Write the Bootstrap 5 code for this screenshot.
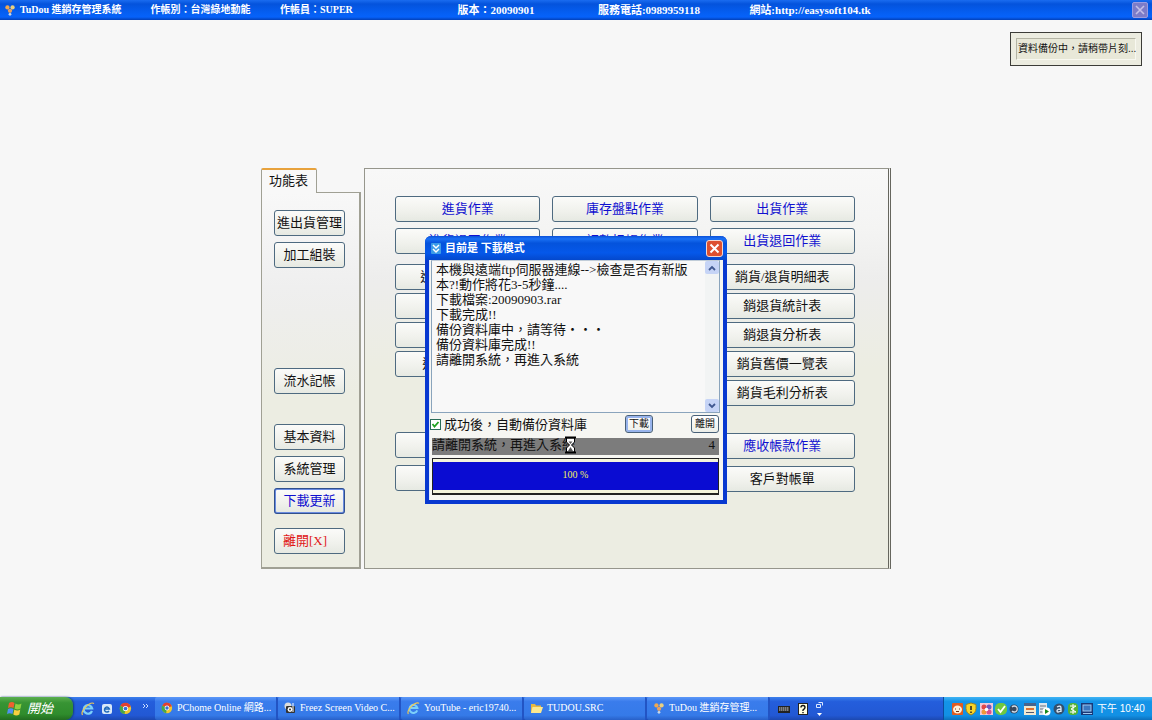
<!DOCTYPE html>
<html lang="zh-Hant">
<head>
<meta charset="utf-8">
<meta name="viewport" content="width=device-width, initial-scale=1">
<title>TuDou 進銷存管理系統</title>
<link href="https://cdn.jsdelivr.net/npm/bootstrap@5.3.0/dist/css/bootstrap.min.css" rel="stylesheet">
<style>
body{font-family:"Liberation Serif","Noto Sans CJK TC",serif;font-size:13px;line-height:15px;color:#111;background:#f7f7f7;}
button,textarea,input{font-family:inherit;}
.titlebar{height:20px;background:linear-gradient(#1a6cf0,#0453dc 20%,#0560f5 70%,#0662fa 85%,#0340b8);color:#fff;font-weight:700;font-size:10px;line-height:20px;}
.title-cells{display:grid;grid-template-columns:131fr 130fr 178fr 141fr 152fr 384fr;white-space:nowrap;}
.title-cells .wide-text{font-size:11px;}
.title-cells a{color:inherit;text-decoration:none;}
.app-close{width:16px;height:16px;background:#7d7cc8;border:1px solid #9a9be0;border-radius:2px;}
.desktop{padding-top:148px;}
.notice{top:12px;right:10px;width:132px;background:#ecece0;border:1px solid #3c3c38;padding:5px;}
.notice div{border:1px solid;border-color:#b4b4a4 #f8f8f0 #f8f8f0 #b4b4a4;background:#e8e8d8;font-family:"Liberation Sans","Noto Sans CJK TC",sans-serif;font-size:10px;line-height:20px;white-space:nowrap;padding-left:1px;}
.workspace{max-width:630px;gap:3px;}
.side{width:100px;}
.tab-head{width:56px;height:25px;line-height:21px;border:1px solid #a0a094;border-top:2px solid #e8a23c;border-bottom:0;border-radius:2px 2px 0 0;background:#f8f8f8;padding-left:7px;margin-bottom:-1px;z-index:1;}
.side-body{border:1px solid #a0a094;border-right-width:2px;border-bottom-width:2px;padding:17px 14px 13px 12px;gap:6px;background:linear-gradient(#f8f8f8,#efefef 25%,#eeeeec 32%,#ecede2 55%,#ecede2);}
.main-panel{min-height:401px;border:1px solid #96968c;border-right:3px double #66665e;background:linear-gradient(#f8f8f8,#f4f4f3 15%,#ededec 28%,#ecede2 50%,#ecede2);padding:27px 33px 0 30px;gap:12px;}
.main-panel .menu-col{flex:1 1 0;gap:3px;}
.xp-btn{height:26px;padding:0;border:1px solid #4e6a80;border-radius:3px;background:linear-gradient(#fbfbf9,#f0f1ec 60%,#e6e9e2);color:#111;font-size:13px;line-height:24px;white-space:nowrap;}
.blue-text{color:#1010d0;}
.red-text{color:#e01818;}
.side-body .current{border:2px solid #6a8ce0;outline:1px solid #31508c;outline-offset:-1px;line-height:22px;}
.row-gap{margin-bottom:3px;}
.block-gap{margin-bottom:7px;}
.account-gap{margin-top:52px;}
.dialog{top:216px;width:302px;height:268px;background:#f6f6f2;border:solid #0838d0;border-width:0 4px 4px;border-radius:6px 6px 0 0;box-shadow:inset 1px 0 #dfe8f8;}
.dialog-title{height:24px;margin:0 -4px;padding:0 4px 0 6px;border-radius:6px 6px 0 0;background:linear-gradient(#0a50d8,#1a70f4 12%,#0453dc 30%,#0558ea 70%,#0448cc);color:#fff;font-size:11px;font-weight:700;}
.dialog-close{width:17px;height:17px;background:#dd5030;border:1px solid #f4d8d0;border-radius:3px;}
.log-wrap{margin:0 3px 0 2px;height:153px;border:1px solid #8aa4bc;border-top-color:#c0ccd8;background:#f8f8f8;}
.log{flex:1;min-width:0;border:0;resize:none;overflow:hidden;background:transparent;font-size:13px;line-height:15px;padding:1px 0 0 4px;color:#111;outline:0;white-space:pre;}
.scroller{width:14px;background:#f2f4f4;}
.scroller button{height:13px;border:0;background:#c6d4f6;border-radius:2px;}
.checks{height:22px;margin:0 4px 0 1px;}
.checks input{appearance:none;width:11px;height:11px;margin:0;border:1px solid #2c6c58;background:#fff url("data:image/svg+xml,%3Csvg xmlns='http://www.w3.org/2000/svg' viewBox='0 0 9 9'%3E%3Cpath d='M1.5 4l2 2.5 4-4.5' fill='none' stroke='%2321a121' stroke-width='1.8'/%3E%3C/svg%3E");}
.checks label{padding-left:3px;}
.mini-btn{width:28px;height:18px;padding:0;font-size:10px;line-height:14px;border:1px solid #486078;border-radius:3px;background:linear-gradient(#fff,#eceee8);color:#111;white-space:nowrap;}
.mini-btn.is-default{box-shadow:inset 0 0 0 2px #98b4ec;}
.leave-btn{margin-left:38px;}
.status-strip{height:17px;margin:3px 4px 0 3px;background:#7c7c7c;line-height:14px;}
.meter{height:37px;margin:3px 4px 0 3px;background:#f4f4dc;border:1px solid #222;border-width:1px 1px 2px;padding:3px 0;}
.meter-fill{height:28px;background:#0a0cd2;color:#f0f060;font-size:10px;line-height:26px;}
.busy-cursor{left:133px;top:-2px;}
.taskbar{height:23px;background:linear-gradient(#3c80ec,#245edc 20%,#2258d4 80%,#1c48b0);color:#fff;font-size:10px;line-height:22px;}
.start-btn{width:73px;border:0;padding:0 0 0 7px;color:#fff;font-style:italic;font-size:13px;background:linear-gradient(#5cb050,#389434 25%,#2f8c2c 75%,#226c20);border-radius:0 8px 8px 0;box-shadow:1px 0 2px #143c80;}
.quick{width:82px;padding-left:8px;gap:6px;}
.tasks{width:615px;}
.task{flex:1 1 0;min-width:0;border:0;padding:0 0 1px 6px;gap:4px;color:#fff;font-size:10px;text-align:left;white-space:nowrap;overflow:hidden;background:linear-gradient(#5c98f8,#3a7cec 20%,#357ae8 80%,#2860c8);border-right:2px solid #2254c4;border-radius:2px;}
.tray{width:209px;padding-left:8px;background:linear-gradient(#40b4f4,#1494e8 20%,#1290e4 80%,#0c70bc);border-left:1px solid #0c4c9c;}
.clock{margin-left:3px;font-family:"Liberation Sans","Noto Sans CJK TC",sans-serif;font-size:10px;white-space:nowrap;}
svg{display:block;flex:none;}
</style>
</head>
<body class="d-flex flex-column min-vh-100">
<svg width="0" height="0" class="position-absolute" aria-hidden="true">
  <symbol id="tudou" viewBox="0 0 14 14"><circle cx="4" cy="4" r="2.5" fill="#f0a850"/><circle cx="10" cy="4" r="2.5" fill="#e8d080"/><circle cx="7" cy="8" r="2.5" fill="#e8a060"/><circle cx="7" cy="12" r="1.6" fill="#c8d8e8"/></symbol>
  <symbol id="ie" viewBox="0 0 14 14"><path d="M11 9A4.3 4.3 0 1 1 11.200 6.500H4" fill="none" stroke="#7cd0fa" stroke-width="2.200"/><path d="M1.500 13C-1 9 9-1 13 1.500" fill="none" stroke="#f4c850" stroke-width="1.200"/></symbol>
  <symbol id="chrome" viewBox="0 0 14 14"><circle cx="7" cy="7" r="6" fill="#f0c830"/><path d="M7 7L1.500 4A6 6 0 0 1 12.600 5z" fill="#e04030"/><path d="M7 7L1.500 4A6 6 0 0 0 6 13z" fill="#48a848"/><circle cx="7" cy="7" r="2.800" fill="#fff"/><circle cx="7" cy="7" r="2" fill="#3870d8"/></symbol>
</svg>

<header class="titlebar d-flex align-items-center pe-1">
  <svg width="12" height="12" class="ms-1 me-1" viewBox="1 0 12 14" aria-hidden="true"><use href="#tudou" width="14" height="14"/></svg>
  <div class="title-cells flex-grow-1">
    <span>TuDou 進銷存管理系統</span>
    <span>作帳別：台灣綠地動能</span>
    <span>作帳員：SUPER</span>
    <span class="wide-text">版本：20090901</span>
    <span class="wide-text">服務電話:0989959118</span>
    <span class="wide-text">網站:<a href="#">http://easysoft104.tk</a></span>
  </div>
  <button class="app-close d-flex align-items-center justify-content-center p-0" aria-label="關閉"><svg width="10" height="10" viewBox="0 0 10 10"><path d="M1 1l8 8M9 1l-8 8" stroke="#c4c0e8" stroke-width="1.600"/></svg></button>
</header>

<main class="desktop flex-grow-1 position-relative">
  <div class="notice position-absolute"><div>資料備份中，請稍帶片刻...</div></div>

  <div class="workspace d-flex mx-auto">
    <nav class="side d-flex flex-column">
      <div class="tab-head position-relative">功能表</div>
      <div class="side-body d-flex flex-column flex-grow-1">
        <button class="xp-btn">進出貨管理</button>
        <button class="xp-btn">加工組裝</button>
        <button class="xp-btn mt-auto">流水記帳</button>
        <button class="xp-btn mt-4">基本資料</button>
        <button class="xp-btn">系統管理</button>
        <button class="xp-btn current blue-text">下載更新</button>
        <button class="xp-btn red-text text-start ps-2 mt-2">離開[X]</button>
      </div>
    </nav>
    <section class="main-panel d-flex flex-grow-1">
      <div class="menu-col d-flex flex-column">
        <button class="xp-btn blue-text row-gap">進貨作業</button>
        <button class="xp-btn blue-text block-gap">進貨退回作業</button>
        <button class="xp-btn">進貨/退貨明細表</button>
        <button class="xp-btn" aria-label="進退貨統計表"></button>
        <button class="xp-btn" aria-label="進退貨分析表"></button>
        <button class="xp-btn">進貨舊價一覽表</button>
        <button class="xp-btn account-gap" aria-label="應付帳款作業"></button>
        <button class="xp-btn mt-1" aria-label="廠商對帳單"></button>
      </div>
      <div class="menu-col d-flex flex-column">
        <button class="xp-btn blue-text row-gap">庫存盤點作業</button>
        <button class="xp-btn blue-text">調整扣帳作業</button>
      </div>
      <div class="menu-col d-flex flex-column">
        <button class="xp-btn blue-text row-gap">出貨作業</button>
        <button class="xp-btn blue-text block-gap">出貨退回作業</button>
        <button class="xp-btn">銷貨/退貨明細表</button>
        <button class="xp-btn">銷退貨統計表</button>
        <button class="xp-btn">銷退貨分析表</button>
        <button class="xp-btn">銷貨舊價一覽表</button>
        <button class="xp-btn">銷貨毛利分析表</button>
        <button class="xp-btn blue-text mt-4">應收帳款作業</button>
        <button class="xp-btn mt-1">客戶對帳單</button>
      </div>
    </section>
  </div>

  <div class="dialog position-absolute start-50 translate-middle-x" role="dialog" aria-labelledby="dlgTitle">
    <div class="dialog-title d-flex align-items-center">
      <svg width="10" height="11" viewBox="0 0 10 11" aria-hidden="true"><rect width="10" height="11" rx="1" fill="#3c9ce8"/><path d="M2 2l3 3 3-3M2 6l3 3 3-3" fill="none" stroke="#fff" stroke-width="1.500"/></svg>
      <span id="dlgTitle" class="flex-grow-1 ms-1">目前是 下載模式</span>
      <button class="dialog-close p-0 d-flex align-items-center justify-content-center" aria-label="關閉"><svg width="11" height="11" viewBox="0 0 11 11"><path d="M1.500 1.500l8 8M9.500 1.500l-8 8" stroke="#fff" stroke-width="2"/></svg></button>
    </div>
    <div class="log-wrap d-flex">
      <textarea class="log" readonly aria-label="下載紀錄">本機與遠端ftp伺服器連線--&gt;檢查是否有新版
本?!動作將花3-5秒鐘....
下載檔案:20090903.rar
下載完成!!
備份資料庫中，請等待・・・
備份資料庫完成!!
請離開系統，再進入系統</textarea>
      <div class="scroller d-flex flex-column justify-content-between">
        <button class="p-0 d-flex align-items-center justify-content-center" aria-label="向上"><svg width="8" height="6" viewBox="0 0 8 6"><path d="M1 5l3-3 3 3" fill="none" stroke="#405890" stroke-width="1.800"/></svg></button>
        <button class="p-0 d-flex align-items-center justify-content-center" aria-label="向下"><svg width="8" height="6" viewBox="0 0 8 6"><path d="M1 1l3 3 3-3" fill="none" stroke="#405890" stroke-width="1.800"/></svg></button>
      </div>
    </div>
    <div class="checks d-flex align-items-center">
      <input type="checkbox" id="autoBackup" checked>
      <label for="autoBackup" class="flex-grow-1">成功後，自動備份資料庫</label>
      <button class="mini-btn is-default">下載</button>
      <button class="mini-btn leave-btn">離開</button>
    </div>
    <div class="status-strip position-relative d-flex justify-content-between pe-1">
      <span>請離開系統，再進入系統</span><span>4</span>
      <svg class="busy-cursor position-absolute" width="11" height="18" viewBox="0 0 11 18" aria-hidden="true"><path d="M1.500 2v4l3 3-3 3v4h8v-4l-3-3 3-3V2z" fill="#fff" stroke="#000"/><path d="M0 1.500h11M0 16.500h11" stroke="#000" stroke-width="2"/><path d="M3.500 5.500h4L5.500 8zM5.500 11l2.500 4h-5z" fill="#555"/></svg>
    </div>
    <div class="meter"><div class="meter-fill text-center" style="width:100%" role="progressbar" aria-valuenow="100">100 %</div></div>
  </div>
</main>

<footer class="taskbar d-flex">
  <button class="start-btn d-flex align-items-center gap-1">
    <svg width="16" height="15" viewBox="0 0 16 15" aria-hidden="true"><path d="M2 2q3-2 5.500 0L6.500 7Q4 5.500 1 7z" fill="#f06030"/><path d="M8.500 2.500q3 2 6 0l-1 5q-3 2-6 0z" fill="#90d040"/><path d="M1 8q3-1.500 5.500 0l-1 5q-3-1.500-5.500 0z" fill="#5090f0"/><path d="M7.300 8.500q3 2 6 0l-1 5q-3 2-6 0z" fill="#f8d040"/></svg>開始</button>
  <div class="quick d-flex align-items-center">
    <svg width="14" height="14"><use href="#ie"/></svg>
    <svg width="12" height="12" viewBox="0 0 12 12"><rect x="1" y="1" width="10" height="10" rx="2" fill="#d8e8f8"/><path d="M8 8a2.500 2.500 0 1 1 .4-2H4" fill="none" stroke="#2068b8" stroke-width="1.400"/></svg>
    <svg width="13" height="13"><use href="#chrome"/></svg>
    <svg width="7" height="12" viewBox="0 0 7 12" class="ms-1"><path d="M1 1l2 2-2 2M4 1l2 2-2 2" fill="none" stroke="#c8dcff"/></svg>
  </div>
  <div class="tasks d-flex">
    <button class="task d-flex align-items-center"><svg width="12" height="12"><use href="#chrome"/></svg>PChome Online 網路...</button>
    <button class="task d-flex align-items-center"><svg width="12" height="12" viewBox="0 0 12 12"><circle cx="4" cy="4" r="3.500" fill="#ddd"/><rect x="2" y="4" width="9" height="7" rx="1" fill="#333"/><circle cx="6" cy="7.500" r="2.400" fill="#fff"/><circle cx="6" cy="7.500" r="1" fill="#333"/><path d="M9 1v9" stroke="#fff"/></svg>Freez Screen Video C...</button>
    <button class="task d-flex align-items-center"><svg width="13" height="13"><use href="#ie"/></svg>YouTube - eric19740...</button>
    <button class="task d-flex align-items-center"><svg width="13" height="12" viewBox="0 0 13 12"><path d="M1 2h4l1 1.500h5V11H1z" fill="#e8b840"/><path d="M1 11l1.500-6H13l-2 6z" fill="#fce890"/></svg>TUDOU.SRC</button>
    <button class="task d-flex align-items-center"><svg width="12" height="12"><use href="#tudou"/></svg>TuDou 進銷存管理...</button>
  </div>
  <div class="d-flex align-items-center gap-2 ps-2">
    <svg width="12" height="8" viewBox="0 0 12 8"><rect width="12" height="7" y="1" fill="#222"/><path d="M1 3h10M1 5h10" stroke="#ddd" stroke-dasharray="1.500 .5"/></svg>
    <svg width="10" height="12" viewBox="0 0 10 12"><rect x=".5" y=".5" width="9" height="11" fill="#fffde0" stroke="#222"/><path d="M3 4.500q0-2 2-2t2 2q0 1-2 2.500V8M5 9v1.200" fill="none" stroke="#111" stroke-width="1.400"/></svg>
    <svg width="7" height="16" viewBox="0 0 7 16"><path d="M2.500 1.500h4v3M.5 3.500h4v3h-4z" fill="none" stroke="#dce8ff"/><path d="M1 12h5l-2.500 3z" fill="#fff"/></svg>
  </div>
  <div class="tray d-flex align-items-center ms-auto">
    <svg width="142" height="14" viewBox="0 0 142 14" aria-hidden="true">
      <rect x="0" y="1" width="11" height="12" rx="1" fill="#e05c20"/><ellipse cx="5.500" cy="7.500" rx="4.500" ry="4" fill="#fff0d8"/><path d="M3 7h1M7 7h1M4 9.500h3" stroke="#703010"/>
      <path d="M19 1l5 1.500v4Q24 11 19 13q-5-2-5-6.500v-4z" fill="#f8d428" stroke="#9c8420"/><path d="M19 4v4M19 9.500V11" stroke="#222" stroke-width="1.500"/>
      <rect x="28" y="1" width="13" height="12" fill="#f4c8d8"/><circle cx="32" cy="5" r="2.500" fill="#e04848"/><circle cx="37" cy="5" r="2.500" fill="#7058c0"/><circle cx="32" cy="10" r="2.500" fill="#f09838"/><circle cx="37" cy="10" r="2.500" fill="#d85090"/><circle cx="34.500" cy="7.500" r="1.800" fill="#fff"/>
      <rect x="43" y="1" width="12" height="12" rx="5" fill="#70c840"/><path d="M46 7l2.500 3L53 4" fill="none" stroke="#fff" stroke-width="1.800"/>
      <circle cx="62" cy="7" r="4.500" fill="#38485c"/><path d="M60 5a3 3 0 1 1 0 4" fill="none" stroke="#d0dce8" stroke-width="1.300"/>
      <rect x="72" y="1" width="12" height="12" fill="#f0e8d0"/><rect x="72" y="1" width="12" height="3" fill="#48648c"/><path d="M74 7h8" stroke="#e07030" stroke-width="2"/><path d="M74 10.500h8" stroke="#505870"/>
      <path d="M87 1h8v12h-8z" fill="#dce4ec"/><path d="M88 4h6M88 7h6M88 10h4" stroke="#68707c"/><circle cx="94.500" cy="9.500" r="4" fill="#fff"/><path d="M93 7l4 2.500-4 2.500z" fill="#18881c"/>
      <circle cx="107" cy="7" r="5.500" fill="#34506c"/><path d="M105 5q4-2 4 1v4M109 7q-4 0-4 2t4 0" fill="none" stroke="#e0ecf8" stroke-width="1.300"/>
      <rect x="116" y="1" width="10" height="12" rx="4" fill="#54b438"/><path d="M118 4h6l-5 3 5 3h-6M121 2v10" fill="none" stroke="#fff"/>
      <rect x="129" y="1" width="12" height="12" fill="#183878"/><rect x="131" y="3" width="8" height="6" fill="#3c78c0" stroke="#a0c8f0"/><path d="M131 11.500h9" stroke="#a0c8f0"/>
    </svg>
    <span class="clock">下午 10:40</span>
  </div>
</footer>
<script src="https://cdn.jsdelivr.net/npm/bootstrap@5.3.0/dist/js/bootstrap.bundle.min.js"></script>
</body>
</html>
